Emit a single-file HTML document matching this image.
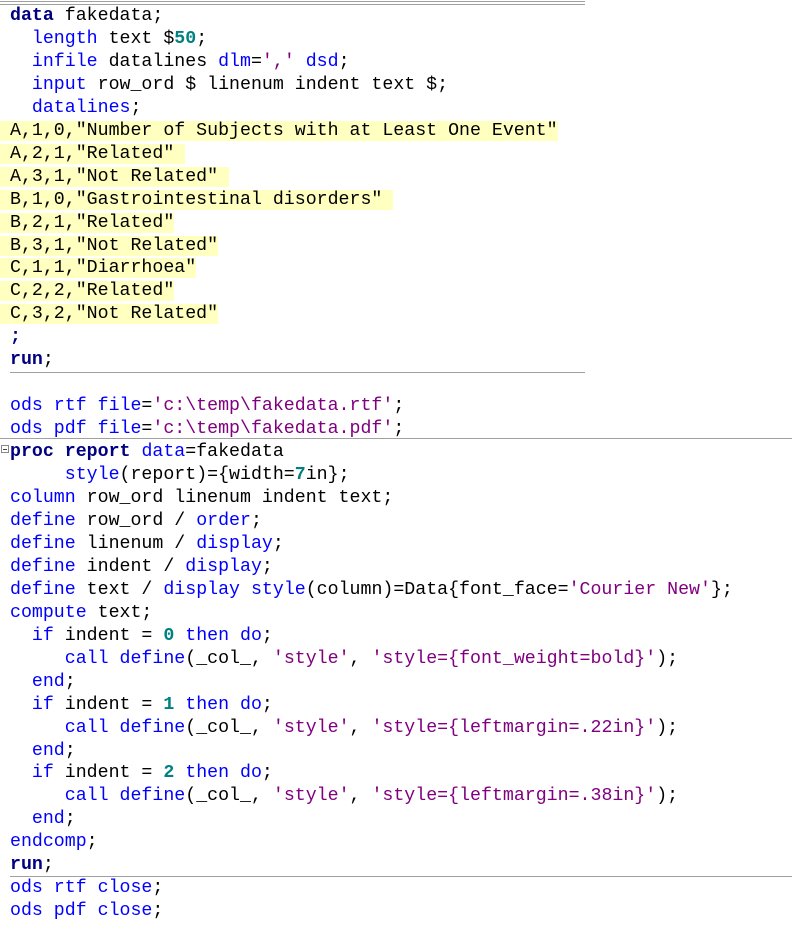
<!DOCTYPE html>
<html><head><meta charset="utf-8"><style>
html,body{margin:0;padding:0;background:#fff;width:792px;height:931px;overflow:hidden;position:relative}
pre{margin:0;position:absolute;left:10px;top:5px;font-family:"Liberation Mono","Courier New",monospace;font-size:18.25px;line-height:22.95px;color:#000}
.k{color:#000080;font-weight:bold}
.b{color:#0000ff}
.s{color:#800080}
.n{color:#008080;font-weight:bold}
.h{background:#ffffc0;margin-left:-10px;padding-left:10px}
.ln{position:absolute;height:1px;background:#a0a0a0}
</style></head><body>
<div class="ln" style="left:0;top:1px;width:585px;background:#a0a0a0"></div>
<div class="ln" style="left:0;top:4px;width:585px;background:#a0a0a0"></div>
<div class="ln" style="left:10px;top:372px;width:575px"></div>
<div class="ln" style="left:0;top:438px;width:792px"></div>
<div class="ln" style="left:10px;top:876px;width:782px"></div>
<div style="position:absolute;left:1px;top:445px;width:6px;height:6px;border:1px solid #888;background:#fff"><div style="position:absolute;left:1px;top:3px;width:4px;height:1px;background:#444"></div></div>
<pre><span class="k">data</span> fakedata;
  <span class="b">length</span> text $<span class="n">50</span>;
  <span class="b">infile</span> datalines <span class="b">dlm</span>=<span class="s">','</span> <span class="b">dsd</span>;
  <span class="b">input</span> row_ord $ linenum indent text $;
  <span class="b">datalines</span>;
<span class="h">A,1,0,"Number of Subjects with at Least One Event"</span>
<span class="h">A,2,1,"Related" </span>
<span class="h">A,3,1,"Not Related" </span>
<span class="h">B,1,0,"Gastrointestinal disorders" </span>
<span class="h">B,2,1,"Related"</span>
<span class="h">B,3,1,"Not Related"</span>
<span class="h">C,1,1,"Diarrhoea"</span>
<span class="h">C,2,2,"Related"</span>
<span class="h">C,3,2,"Not Related"</span>
<span class="k">;</span>
<span class="k">run</span>;

<span class="b">ods rtf file</span>=<span class="s">'c:\temp\fakedata.rtf'</span>;
<span class="b">ods pdf file</span>=<span class="s">'c:\temp\fakedata.pdf'</span>;
<span class="k">proc report</span> <span class="b">data</span>=fakedata
     <span class="b">style</span>(report)={width=<span class="n">7</span>in};
<span class="b">column</span> row_ord linenum indent text;
<span class="b">define</span> row_ord / <span class="b">order</span>;
<span class="b">define</span> linenum / <span class="b">display</span>;
<span class="b">define</span> indent / <span class="b">display</span>;
<span class="b">define</span> text / <span class="b">display</span> <span class="b">style</span>(column)=Data{font_face=<span class="s">'Courier New'</span>};
<span class="b">compute</span> text;
  <span class="b">if</span> indent = <span class="n">0</span> <span class="b">then do</span>;
     <span class="b">call define</span>(_col_, <span class="s">'style'</span>, <span class="s">'style={font_weight=bold}'</span>);
  <span class="b">end</span>;
  <span class="b">if</span> indent = <span class="n">1</span> <span class="b">then do</span>;
     <span class="b">call define</span>(_col_, <span class="s">'style'</span>, <span class="s">'style={leftmargin=.22in}'</span>);
  <span class="b">end</span>;
  <span class="b">if</span> indent = <span class="n">2</span> <span class="b">then do</span>;
     <span class="b">call define</span>(_col_, <span class="s">'style'</span>, <span class="s">'style={leftmargin=.38in}'</span>);
  <span class="b">end</span>;
<span class="b">endcomp</span>;
<span class="k">run</span>;
<span class="b">ods rtf close</span>;
<span class="b">ods pdf close</span>;
</pre>
</body></html>
